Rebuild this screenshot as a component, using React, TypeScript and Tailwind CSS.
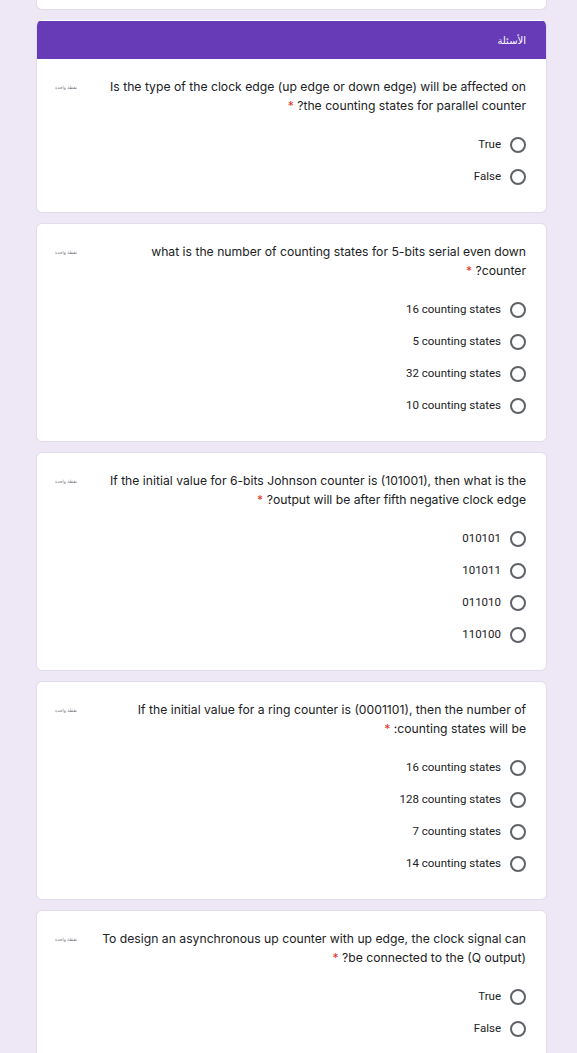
import React from "react";

type Question = {
  id: number;
  text: string;
  options: string[];
};

const questions: Question[] = [
  {
    id: 1,
    text: "Is the type of the clock edge (up edge or down edge) will be affected on the counting states for parallel counter?",
    options: ["True", "False"],
  },
  {
    id: 2,
    text: "what is the number of counting states for 5-bits serial even down counter?",
    options: [
      "16 counting states",
      "5 counting states",
      "32 counting states",
      "10 counting states",
    ],
  },
  {
    id: 3,
    text: "If the initial value for 6-bits Johnson counter is (101001), then what is the output will be after fifth negative clock edge?",
    options: ["010101", "101011", "011010", "110100"],
  },
  {
    id: 4,
    text: "If the initial value for a ring counter is (0001101), then the number of counting states will be:",
    options: [
      "16 counting states",
      "128 counting states",
      "7 counting states",
      "14 counting states",
    ],
  },
  {
    id: 5,
    text: "To design an asynchronous up counter with up edge, the clock signal can be connected to the (Q output)?",
    options: ["True", "False"],
  },
];

const Radio = () => (
  <span className="block h-[16px] w-[16px] shrink-0 rounded-full border-2 border-[#5f6368] bg-white" />
);

const QuestionBody: React.FC<{ q: Question }> = ({ q }) => (
  <div className="pl-[18px] pr-[20px] pt-[18px] pb-[19px]" dir="rtl">
    <div className="flex items-start">
      <p className="flex-1 text-[12.2px] leading-[19px] text-[#202124] font-['Inter','DejaVu_Sans',sans-serif]">
        {q.text} <span className="text-[#d93025]">*</span>
      </p>
      <span className="mr-[22px] w-[22px] shrink-0 whitespace-nowrap pt-[7px] text-[4.5px] leading-[8px] text-[#70757a] font-['DejaVu_Sans',sans-serif]">
        نقطة واحدة
      </span>
    </div>
    <div className="mt-[14px] flex flex-col">
      {q.options.map((opt) => (
        <label
          key={opt}
          className="flex h-[32px] cursor-pointer items-center gap-[9px]"
        >
          <Radio />
          <span
            dir="ltr"
            className="text-[11.5px] text-[#202124] font-['Roboto','Liberation_Sans',sans-serif]"
          >
            {opt}
          </span>
        </label>
      ))}
    </div>
  </div>
);

export default function App() {
  return (
    <div className="min-h-screen bg-[#ede7f6] pb-6">
      <div className="ml-[36px] flex w-[511px] flex-col gap-[10px]">
        <div className="h-[10px] rounded-b-[6px] border border-t-0 border-[#e0dcea] bg-white" />

        <div className="overflow-hidden rounded-[6px] border-x border-b border-[#e0dcea] bg-white">
          <div
            dir="rtl"
            className="mt-px flex h-[38px] items-center bg-[#673ab7] px-[20px] text-[10px] text-white font-['DejaVu_Sans',sans-serif]"
          >
            الأسئلة
          </div>
          <QuestionBody q={questions[0]} />
        </div>

        {questions.slice(1).map((q) => (
          <div
            key={q.id}
            className="rounded-[6px] border border-[#e0dcea] bg-white"
          >
            <QuestionBody q={q} />
          </div>
        ))}
      </div>
    </div>
  );
}
